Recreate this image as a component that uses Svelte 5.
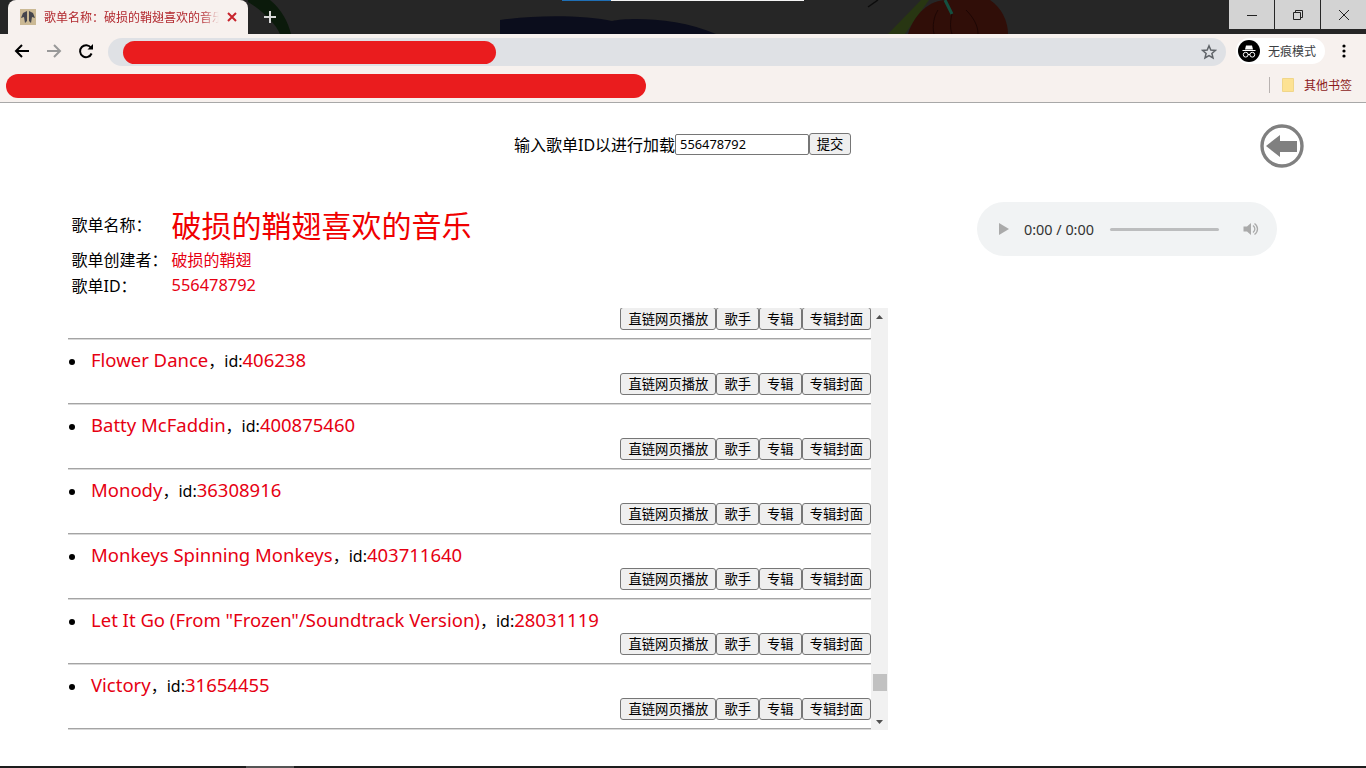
<script>
  const songs = [
    { name: 'Flower Dance', id: '406238' },
    { name: 'Batty McFaddin', id: '400875460' },
    { name: 'Monody', id: '36308916' },
    { name: 'Monkeys Spinning Monkeys', id: '403711640' },
    { name: 'Let It Go (From "Frozen"/Soundtrack Version)', id: '28031119' },
    { name: 'Victory', id: '31654455' }
  ];
  const actions = ['直链网页播放', '歌手', '专辑', '专辑封面'];
</script>

<div class="browser">
  <header class="tabstrip">
    <svg class="wallpaper" width="1366" height="34" viewBox="0 0 1366 34" aria-hidden="true">
      <path d="M248 0 H270 C282 10 288 22 291 34 H280 C276 24 262 10 248 2Z" fill="#0b1a0b"/>
      <path d="M500 20 C540 14 590 16 612 21 C630 17 680 18 716 34 H500Z" fill="#0b0d1c"/>
      <rect x="562" width="49" height="1" fill="#1f6fb5"/>
      <rect x="611" width="193" height="1" fill="#f4f4f4"/>
      <path d="M868 7 L878 0" stroke="#0c0c0c" stroke-width="1.5"/>
      <path d="M888 34 L921 0 H929 L905 34Z" fill="#283612"/>
      <path d="M908 34 C914 14 930 0 946 0 H990 C1002 8 1008 22 1008 34Z" fill="#300e08"/>
      <path d="M945 0 L952 14" stroke="#145040" stroke-width="3"/>
      <path d="M938 10 C934 16 932 26 934 34 M952 14 C950 22 950 28 952 34 M966 10 C974 18 978 26 978 34" stroke="#1d0604" fill="none"/>
    </svg>
    <div class="tab">
      <svg class="favicon" width="16" height="16" viewBox="0 0 16 16" aria-hidden="true">
        <rect width="16" height="16" fill="#cbb994"/>
        <path d="M7 2 L3 4 L1 9 L4 8 L5 14 L7 12Z M9 2 L13 4 L15 9 L12 8 L11 14 L9 12Z" fill="#45454d"/>
      </svg>
      <span class="tab-title">歌单名称：破损的鞘翅喜欢的音乐</span>
      <svg class="tab-close" width="10" height="10" viewBox="0 0 10 10" aria-hidden="true"><path d="M1 1 L9 9 M9 1 L1 9" stroke="#c8242c" stroke-width="2"/></svg>
    </div>
    <svg class="newtab" width="14" height="14" viewBox="0 0 14 14" aria-hidden="true"><path d="M7 1 V13 M1 7 H13" stroke="#d8d8d8" stroke-width="2"/></svg>
    <div class="winctl">
      <div class="winbtn"><svg width="12" height="12" viewBox="0 0 12 12"><path d="M1 6.5 H11" stroke="#222"/></svg></div>
      <div class="winbtn"><svg width="12" height="12" viewBox="0 0 12 12"><path d="M1.5 3.5 H8.5 V10.5 H1.5Z M3.5 3.5 V1.5 H10.5 V8.5 H8.5" stroke="#222" fill="none"/></svg></div>
      <div class="winbtn"><svg width="12" height="12" viewBox="0 0 12 12"><path d="M1 1 L11 11 M11 1 L1 11" stroke="#222"/></svg></div>
    </div>
  </header>

  <div class="toolbar">
    <svg class="nav" width="16" height="16" viewBox="0 0 16 16"><path d="M15 8 H2 M8 2 L2 8 L8 14" stroke="#000" stroke-width="2" fill="none"/></svg>
    <svg class="nav" width="16" height="16" viewBox="0 0 16 16"><path d="M1 8 H14 M8 2 L14 8 L8 14" stroke="#999" stroke-width="2" fill="none"/></svg>
    <svg class="nav" width="16" height="16" viewBox="0 0 16 16"><path d="M13.6 10.5 A6 6 0 1 1 13 4.7" stroke="#000" stroke-width="2" fill="none"/><path d="M9.5 6.5 H15 V1Z" fill="#000"/></svg>
    <div class="omnibox">
      <div class="redact url"></div>
      <svg class="star" width="16" height="16" viewBox="0 0 16 16"><path d="M8 1.8 L9.8 6 L14.4 6.4 L10.9 9.4 L12 13.9 L8 11.5 L4 13.9 L5.1 9.4 L1.6 6.4 L6.2 6Z" stroke="#5f6368" stroke-width="1.5" fill="none"/></svg>
    </div>
    <div class="incognito">
      <svg width="22" height="22" viewBox="0 0 22 22"><circle cx="11" cy="11" r="11" fill="#000"/><path d="M7 9.5 L8 5.5 H14 L15 9.5Z M4.5 10 H17.5 V11 H4.5Z" fill="#fff"/><circle cx="7.7" cy="14.7" r="2.4" stroke="#fff" fill="none"/><circle cx="14.3" cy="14.7" r="2.4" stroke="#fff" fill="none"/><path d="M10 14.5 H12" stroke="#fff"/></svg>
      <span>无痕模式</span>
    </div>
    <svg class="menu" width="4" height="16" viewBox="0 0 4 16"><circle cx="2" cy="3" r="1.6"/><circle cx="2" cy="8" r="1.6"/><circle cx="2" cy="13" r="1.6"/></svg>
  </div>

  <div class="bookmarks">
    <div class="redact marks"></div>
    <div class="sep"></div>
    <svg width="12" height="14" viewBox="0 0 12 14"><path d="M0.5 0.5 H11.5 V13.5 H0.5Z" fill="#fde293" stroke="#f0d68a"/></svg>
    <span class="other">其他书签</span>
  </div>
</div>

<main class="page">
  <div class="topline">
    <form class="loader" onsubmit={(e) => e.preventDefault()}>
      <span>输入歌单ID以进行加载</span><input type="text" value="556478792" /><button class="submit">提交</button>
    </form>
    <svg class="back" width="44" height="44" viewBox="0 0 44 44" aria-label="返回">
      <circle cx="22" cy="22" r="20" stroke="#808080" stroke-width="3.4" fill="#fff"/>
      <path d="M6 22 L20 11 V17 H37 V28 H20 V33Z" fill="#808080"/>
    </svg>
  </div>

  <div class="info">
    <dl class="meta">
      <div class="meta-row first"><dt>歌单名称：</dt><dd class="title">破损的鞘翅喜欢的音乐</dd></div>
      <div class="meta-row second"><dt>歌单创建者：</dt><dd>破损的鞘翅</dd></div>
      <div class="meta-row third"><dt>歌单ID：</dt><dd class="num">556478792</dd></div>
    </dl>
    <div class="player">
      <svg width="12" height="14" viewBox="0 0 12 14"><path d="M1 1 L11 7 L1 13Z" fill="#aaa"/></svg>
      <span class="time">0:00 / 0:00</span>
      <div class="track"></div>
      <svg width="16" height="16" viewBox="0 0 16 16"><path d="M0.5 5.5 H4 L8 2 V14 L4 10.5 H0.5Z" fill="#aaa"/><path d="M10 4.5 C12.5 6.5 12.5 9.5 10 11.5 M11.5 2.5 C15.5 5.5 15.5 10.5 11.5 13.5" stroke="#aaa" stroke-width="1.3" fill="none"/></svg>
    </div>
  </div>

  <div class="listbox">
    <div class="list">
      <div class="actions clipped">
        {#each actions as a}<button>{a}</button>{/each}
      </div>
      <hr />
      <ul>
        {#each songs as s}
          <li>
            <div class="song"><span class="red">{s.name}</span>，id:<span class="red">{s.id}</span></div>
            <div class="actions">
              {#each actions as a}<button>{a}</button>{/each}
            </div>
            <hr />
          </li>
        {/each}
      </ul>
    </div>
    <div class="scrollbar">
      <svg width="17" height="17" viewBox="0 0 17 17"><path d="M5 11 L8.5 7 L12 11Z" fill="#505050"/></svg>
      <div class="thumb-area"><div class="thumb"></div></div>
      <svg width="17" height="17" viewBox="0 0 17 17"><path d="M5 7 L8.5 11 L12 7Z" fill="#505050"/></svg>
    </div>
  </div>
</main>
<div class="taskbar"><div class="task-active"></div></div>

<style>
  :global(body) {
    margin: 0;
    background: #fff;
    font-family: "Noto Sans", "Noto Sans CJK SC", sans-serif;
    color: #000;
    overflow: hidden;
  }
  .browser { background: #f7f1ee; }
  .tabstrip {
    position: relative;
    height: 34px;
    background: #262626;
    display: flex;
    align-items: flex-start;
    overflow: hidden;
  }
  .wallpaper { position: absolute; left: 0; top: 0; }
  .tab {
    position: relative;
    margin-left: 8px;
    width: 240px;
    height: 34px;
    box-sizing: border-box;
    padding: 0 11px 0 12px;
    background: #f7f1ee;
    border-radius: 8px 8px 0 0;
    display: flex;
    align-items: center;
    gap: 8px;
  }
  .favicon { flex: none; }
  .tab-title {
    font-size: 12px;
    color: #b2282e;
    white-space: nowrap;
    overflow: hidden;
    flex: 1;
    -webkit-mask-image: linear-gradient(to right, #000 90%, transparent);
    mask-image: linear-gradient(to right, #000 90%, transparent);
  }
  .tab-close { flex: none; }
  .newtab { position: relative; margin: 10px 0 0 15px; }
  .winctl {
    position: relative;
    margin-left: auto;
    display: flex;
    height: 29px;
    gap: 1px;
  }
  .winbtn {
    width: 45px;
    background: #d3d3d3;
    display: flex;
    align-items: center;
    justify-content: center;
  }
  .toolbar {
    height: 34px;
    display: flex;
    align-items: center;
    padding: 0 0 0 14px;
  }
  .nav { margin-right: 16px; flex: none; }
  .nav:nth-child(3) { margin-right: 14px; }
  .omnibox {
    width: 1118px;
    height: 28px;
    margin-top: 2px;
    box-sizing: border-box;
    padding: 0 9px 0 15px;
    background: #dfe1e5;
    border-radius: 14px;
    display: flex;
    align-items: center;
    justify-content: space-between;
    flex: none;
  }
  .redact { background: #ea1c1e; border-radius: 12px; height: 24px; }
  .url { width: 373px; height: 23px; }
  .incognito {
    margin-left: 10px;
    width: 89px;
    height: 26px;
    box-sizing: border-box;
    padding-left: 2px;
    background: #fff;
    border-radius: 13px;
    display: flex;
    align-items: center;
    gap: 8px;
    font-size: 12px;
    color: #3c4043;
    flex: none;
  }
  .menu { margin-left: 17px; flex: none; }
  .bookmarks {
    height: 34px;
    box-sizing: content-box;
    border-bottom: 1px solid #a8a8a8;
    display: flex;
    align-items: center;
    padding-left: 6px;
  }
  .marks { width: 640px; margin-top: 2px; }
  .sep { width: 1px; height: 16px; background: #b8b2b0; margin-left: 623px; margin-right: 12px; }
  .other { font-size: 12px; color: #8c1a1a; margin-left: 10px; }

  .page { height: 663px; box-sizing: border-box; padding: 30px 0 0 68px; }
  .topline { position: relative; height: 41px; }
  .loader {
    position: absolute;
    left: 446px;
    top: 0;
    display: flex;
    align-items: center;
    font-size: 16px;
    color: #000;
    height: 22px;
  }
  .loader input {
    width: 134px;
    height: 21px;
    box-sizing: border-box;
    border: 1px solid #767676;
    border-radius: 2px;
    padding: 1px 4px;
    font: 12.8px "Noto Sans", sans-serif;
    color: #000;
    outline: none;
  }
  button {
    height: 22px;
    box-sizing: border-box;
    padding: 0 7px;
    background: #efefef;
    border: 1px solid #767676;
    border-radius: 3px;
    font: 13.33px "Noto Sans CJK SC", sans-serif;
    color: #000;
    line-height: 20px;
    white-space: nowrap;
  }
  .submit { width: 42px; padding: 0; }
  .back { position: absolute; left: 1192px; top: -9px; }

  .info {
    display: flex;
    justify-content: space-between;
    padding: 28px 89px 0 3.5px;
    height: 107px;
    box-sizing: content-box;
  }
  .meta { margin: 0; }
  .meta-row { display: flex; align-items: center; height: 25px; font-size: 16px; }
  .meta-row.first { height: 46px; margin-top: -1px; }
  .meta-row.second { margin-top: -1px; }
  .meta-row.third { margin-top: 1px; }
  dt { width: 100px; }
  dd { margin: 0; color: #e60012; }
  dd.num { font-size: 16.4px; }
  dd.title { font-size: 30px; color: #f00000; }
  .player {
    width: 300px;
    height: 54px;
    box-sizing: border-box;
    padding: 0 18px 0 21px;
    border-radius: 27px;
    background: #f1f3f4;
    display: flex;
    align-items: center;
    font-size: 14.4px;
    color: #333;
  }
  .time { margin-left: 14px; }
  .track { width: 109px; height: 3px; border-radius: 2px; background: #bcbdbe; margin: 0 24px 0 16px; }

  .listbox { display: flex; width: 820px; height: 422px; margin-top: -1px; }
  .list { width: 803px; overflow: hidden; }
  ul { margin: 0; padding: 0 0 0 23px; list-style: none; }
  li { height: 65px; }
  .song { height: 33px; padding-top: 5px; box-sizing: border-box; font-size: 16px; line-height: 30px; white-space: nowrap; }
  .song::before {
    content: "";
    display: inline-block;
    width: 6px;
    height: 6px;
    margin: 0 16px 2px -22px;
    border-radius: 50%;
    background: #000;
    vertical-align: middle;
  }
  .red { color: #e60012; font-size: 18.5px; }
  .actions { display: flex; justify-content: flex-end; height: 22px; }
  .actions.clipped { overflow: hidden; align-items: flex-end; }
  .actions.clipped button { flex: none; height: 23px; }
  hr { border: 0; border-top: 1px solid #a4a4a4; height: 1px; margin: 8px 0 0 0; background: #d8d8d8; }
  ul hr { margin-left: -23px; }
  .scrollbar {
    width: 17px;
    background: #f1f1f1;
    display: flex;
    flex-direction: column;
  }
  .scrollbar svg { flex: none; }
  .thumb-area { flex: 1; display: flex; flex-direction: column; justify-content: flex-end; padding-bottom: 22px; }
  .thumb { width: 14px; height: 17px; margin-left: 2px; background: #c1c1c1; }
  .taskbar { height: 2px; background: #1d1d1d; padding-left: 246px; }
  .task-active { width: 48px; height: 2px; background: #555; }
</style>
